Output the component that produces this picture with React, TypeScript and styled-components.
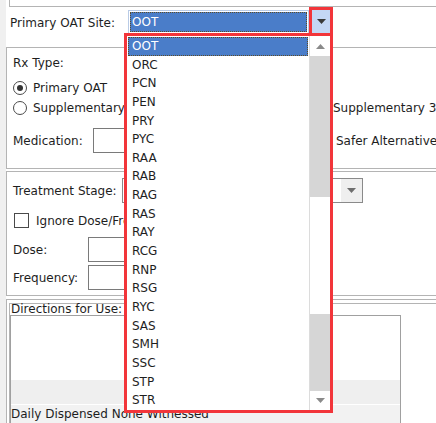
import React from 'react';
import styled, { createGlobalStyle } from 'styled-components';

const sites = [
  'OOT', 'ORC', 'PCN', 'PEN', 'PRY', 'PYC', 'RAA', 'RAB', 'RAG', 'RAS',
  'RAY', 'RCG', 'RNP', 'RSG', 'RYC', 'SAS', 'SMH', 'SSC', 'STP', 'STR',
];

const Triangle = ({ up, color }: { up?: boolean; color: string }) => (
  <svg width="9" height="5" viewBox="0 0 9 5">
    <polygon points={up ? '0,5 9,5 4.5,0' : '0,0 9,0 4.5,5'} fill={color} />
  </svg>
);

export default function App() {
  return (
    <Screen>
      <GlobalStyle />
      <Strip />
      <Content>
        <TopBox />
        <SiteRow>
          <SiteLabel>Primary OAT Site:</SiteLabel>
          <Combo>
            <ComboField>
              <Selected>OOT</Selected>
            </ComboField>
            <ArrowBtn>
              <Triangle color="#3a3a3a" />
            </ArrowBtn>
            <Popup>
              <Items>
                {sites.map((s, i) => (
                  <Item key={s} $active={i === 0}>
                    {s}
                  </Item>
                ))}
              </Items>
              <ScrollBar>
                <ScrollBtn $h={20}>
                  <Triangle up color="#8a8a8a" />
                </ScrollBtn>
                <Track $h={141} />
                <Thumb $h={117} />
                <Track $h={77} />
                <ScrollBtn $h={18}>
                  <Triangle color="#8a8a8a" />
                </ScrollBtn>
              </ScrollBar>
            </Popup>
          </Combo>
        </SiteRow>

        <RxBox>
          <Line>Rx Type:</Line>
          <RadioRow $top={11}>
            <Choice>
              <Radio $on />
              Primary OAT
            </Choice>
          </RadioRow>
          <RadioRow $top={6}>
            <Choice>
              <Radio />
              Supplementary 1
            </Choice>
            <Choice>
              <Radio />
              Supplementary 2
            </Choice>
            <Choice>
              <Radio />
              Supplementary 3
            </Choice>
          </RadioRow>
          <FieldRow $top={13}>
            <FieldLabel $w={80}>Medication:</FieldLabel>
            <Input $w={205} />
            <Choice $gap={5} style={{ marginLeft: 20 }}>
              <Check $size={13} />
              Safer Alternative
            </Choice>
          </FieldRow>
        </RxBox>

        <TreatBox>
          <FieldRow $top={0}>
            <FieldLabel $w={109}>Treatment Stage:</FieldLabel>
            <Select>
              <SelectBtn>
                <Triangle color="#6e6e6e" />
              </SelectBtn>
            </Select>
          </FieldRow>
          <CheckRow>
            <Check $size={15} />
            Ignore Dose/Frequency
          </CheckRow>
          <FieldRow $top={9}>
            <FieldLabel $w={75}>Dose:</FieldLabel>
            <Input $w={240} />
          </FieldRow>
          <FieldRow $top={3}>
            <FieldLabel $w={75}>Frequency:</FieldLabel>
            <Input $w={240} />
          </FieldRow>
        </TreatBox>

        <DirBox>
          <DirPanel>
            <DirLabel>Directions for Use:</DirLabel>
            <TextArea>
              <TextBody />
              <HBar />
              <Footer>Daily Dispensed None Witnessed</Footer>
            </TextArea>
          </DirPanel>
        </DirBox>
      </Content>
    </Screen>
  );
}

const GlobalStyle = createGlobalStyle`
  html, body {
    margin: 0;
    padding: 0;
    background: #ffffff;
    overflow: hidden;
  }
  body {
    font-family: 'DejaVu Sans', Tahoma, sans-serif;
    font-size: 12px;
    color: #1e1e1e;
  }
`;

const Screen = styled.div`
  display: flex;
  width: 436px;
  height: 423px;
  overflow: hidden;
  background: #ffffff;
`;

const Strip = styled.div`
  flex: none;
  width: 6px;
  background: #f0f0f0;
`;

const Content = styled.div`
  flex: none;
  width: 540px;
  display: flex;
  flex-direction: column;
`;

const TopBox = styled.div`
  height: 6px;
  margin-left: 3px;
  border-left: 1px solid #b4b4b4;
  border-bottom: 1px solid #b4b4b4;
`;

const SiteRow = styled.div`
  height: 40px;
  box-sizing: border-box;
  padding: 3px 0 0 4px;
  display: flex;
  align-items: flex-start;
`;

const SiteLabel = styled.div`
  width: 118px;
  line-height: 26px;
  white-space: nowrap;
`;

const Combo = styled.div`
  position: relative;
  display: flex;
  align-items: flex-start;
`;

const ComboField = styled.div`
  width: 181px;
  height: 24px;
  box-sizing: border-box;
  border: 1px solid #b9cbe6;
  padding: 1px;
`;

const Selected = styled.div`
  height: 100%;
  box-sizing: border-box;
  background: #4a7dc9;
  color: #ffffff;
  border: 1px dotted #5c4c28;
  padding-left: 1px;
  line-height: 18px;
`;

const ArrowBtn = styled.div`
  margin-left: 3px;
  width: 18px;
  height: 23px;
  background: #c4d7f5;
  outline: 3px solid #f2353a;
  display: flex;
  align-items: center;
  justify-content: center;
`;

const Popup = styled.div`
  position: absolute;
  left: -4px;
  top: 23px;
  z-index: 10;
  width: 209px;
  height: 380px;
  box-sizing: border-box;
  border: 3px solid #f2353a;
  background: #ffffff;
  display: flex;
`;

const Items = styled.div`
  flex: 1;
  padding-top: 1px;
`;

const Item = styled.div<{ $active?: boolean }>`
  height: 18.65px;
  line-height: 18.65px;
  margin: 0 1px;
  padding-left: 3px;
  box-sizing: border-box;
  color: ${(p) => (p.$active ? '#ffffff' : '#1e1e1e')};
  background: ${(p) => (p.$active ? '#4a7dc9' : 'transparent')};
  border: 1px dotted ${(p) => (p.$active ? '#5c4c28' : 'transparent')};
  line-height: 16.65px;
`;

const ScrollBar = styled.div`
  width: 20px;
  border-left: 1px solid #dcdcdc;
  display: flex;
  flex-direction: column;
`;

const ScrollBtn = styled.div<{ $h: number }>`
  height: ${(p) => p.$h}px;
  background: #ffffff;
  display: flex;
  align-items: center;
  justify-content: center;
`;

const Track = styled.div<{ $h: number }>`
  height: ${(p) => p.$h}px;
  background: #d6d6d6;
`;

const Thumb = styled.div<{ $h: number }>`
  height: ${(p) => p.$h}px;
  background: #ffffff;
`;

const Group = styled.div`
  border: 1px solid #b4b4b4;
  display: flex;
  flex-direction: column;
`;

const RxBox = styled(Group)`
  padding: 8px 0 15px 6px;
`;

const TreatBox = styled(Group)`
  margin-top: 2px;
  padding: 6px 0 5px 6px;
`;

const DirBox = styled(Group)`
  margin-top: 3px;
  padding: 3px 0 0 2px;
  border-bottom: none;
  flex: 1;
`;

const Line = styled.div`
  line-height: 14px;
  height: 14px;
`;

const RadioRow = styled.div<{ $top: number }>`
  margin-top: ${(p) => p.$top}px;
  height: 14px;
  display: grid;
  grid-template-columns: 150px 150px 150px;
`;

const Choice = styled.label<{ $gap?: number }>`
  display: flex;
  align-items: center;
  gap: ${(p) => p.$gap ?? 6}px;
  white-space: nowrap;
  line-height: 14px;
`;

const Radio = styled.span<{ $on?: boolean }>`
  flex: none;
  width: 14px;
  height: 14px;
  box-sizing: border-box;
  border-radius: 50%;
  border: 1px solid #4a4a4a;
  background: #ffffff;
  display: flex;
  align-items: center;
  justify-content: center;
  &::after {
    content: '';
    width: 6px;
    height: 6px;
    border-radius: 50%;
    background: ${(p) => (p.$on ? '#333333' : 'transparent')};
  }
`;

const Check = styled.span<{ $size: number }>`
  flex: none;
  width: ${(p) => p.$size}px;
  height: ${(p) => p.$size}px;
  box-sizing: border-box;
  border: 1px solid #4a4a4a;
  background: #ffffff;
`;

const FieldRow = styled.div<{ $top: number }>`
  margin-top: ${(p) => p.$top}px;
  height: 25px;
  display: flex;
  align-items: center;
`;

const FieldLabel = styled.div<{ $w: number }>`
  width: ${(p) => p.$w}px;
  flex: none;
  white-space: nowrap;
`;

const Input = styled.div<{ $w: number }>`
  width: ${(p) => p.$w}px;
  height: 25px;
  box-sizing: border-box;
  border: 1px solid #7a7a7a;
  background: #ffffff;
`;

const Select = styled.div`
  width: 241px;
  height: 25px;
  box-sizing: border-box;
  border: 1px solid #8a8a8a;
  background: #ffffff;
  display: flex;
  justify-content: flex-end;
`;

const SelectBtn = styled.div`
  width: 21px;
  background: #efefef;
  display: flex;
  align-items: center;
  justify-content: center;
`;

const CheckRow = styled.label`
  margin: 10px 0 0 1px;
  height: 15px;
  display: flex;
  align-items: center;
  gap: 7px;
  white-space: nowrap;
`;

const DirPanel = styled.div`
  flex: 1;
  border-left: 1px solid #b4b4b4;
  border-top: 1px solid #b4b4b4;
  display: flex;
  flex-direction: column;
`;

const DirLabel = styled.div`
  height: 11px;
  line-height: 11px;
  padding-left: 1px;
  white-space: nowrap;
`;

const TextArea = styled.div`
  width: 389px;
  flex: 1;
  border: 1px solid #a0a0a0;
  border-bottom: none;
  display: flex;
  flex-direction: column;
`;

const TextBody = styled.div`
  height: 64px;
  background: #ffffff;
`;

const HBar = styled.div`
  height: 24px;
  background: #efefef;
  border-bottom: 1px solid #ffffff;
`;

const Footer = styled.div`
  flex: 1;
  background: #f2f2f2;
  line-height: 18px;
  padding-left: 0;
  white-space: nowrap;
`;
